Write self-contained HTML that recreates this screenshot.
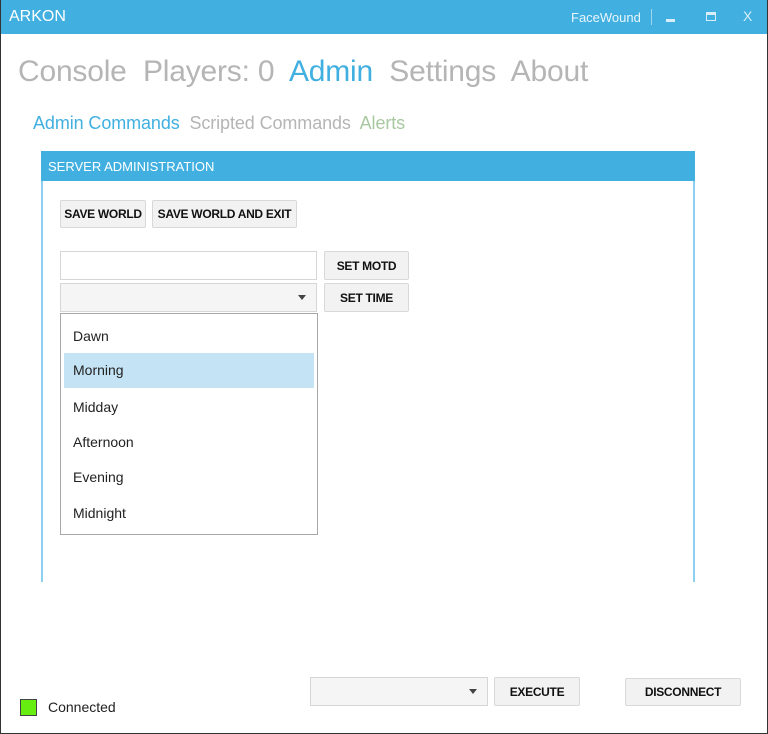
<!DOCTYPE html>
<html><head><style>
*{box-sizing:border-box;margin:0;padding:0}
body{width:768px;height:734px;overflow:hidden;background:#fff;font-family:"Liberation Sans",sans-serif;position:relative}
.win{position:absolute;left:0;top:0;width:768px;height:734px;border:1px solid #333;border-top:none}
.tb{position:absolute;left:0;top:0;width:768px;height:34px;background:#41b0e0;color:#fff}
.a{position:absolute}
.btn{position:absolute;background:#f2f2f2;border:1px solid #d8d8d8;border-radius:2px;font-size:12px;font-weight:bold;color:#111;display:flex;align-items:center;justify-content:center;letter-spacing:-0.3px}
.box{position:absolute;background:#f5f5f5;border:1px solid #d6d6d6}
.item{position:absolute;left:3px;width:250px;height:35px;font-size:14px;color:#222;padding-left:9px;line-height:35px}
</style></head><body>
<div class="tb">
<div class="a" style="left:9px;top:8px;font-size:16px">ARKON</div>
<div class="a" style="left:571px;top:10px;font-size:13px;color:#e8f5fc">FaceWound</div>
<div class="a" style="left:651px;top:9px;width:1px;height:16px;background:#9fd6ef"></div>
<div class="a" style="left:666px;top:19px;width:9px;height:3px;background:#d8eef9"></div>
<div class="a" style="left:706px;top:12px;width:10px;height:9px;border:1px solid #d8eef9;border-top-width:3px"></div>
<div class="a" style="left:743px;top:8px;font-size:14px;color:#d8eef9">X</div>
</div>
<div class="a" style="left:18px;top:55px;font-size:30px;color:#b5b5b5;white-space:nowrap;letter-spacing:-0.2px">Console&nbsp; Players: 0&nbsp; <span style="color:#41b0e0">Admin</span>&nbsp; Settings&nbsp; About</div>
<div class="a" style="left:33px;top:113px;font-size:18px;color:#b5b5b5;white-space:nowrap;letter-spacing:-0.1px"><span style="color:#41b0e0">Admin Commands</span>&nbsp; Scripted Commands&nbsp; <span style="color:#a8c8a0">Alerts</span></div>
<div class="a" style="left:41px;top:151px;width:654px;height:431px;border-left:2px solid #8fd0ee;border-right:2px solid #8fd0ee"></div>
<div class="a" style="left:41px;top:151px;width:654px;height:30px;background:#41b0e0;color:#fff;font-size:13px;padding:8px 0 0 7px">SERVER ADMINISTRATION</div>
<div class="btn" style="left:60px;top:200px;width:86px;height:28px">SAVE WORLD</div>
<div class="btn" style="left:152px;top:200px;width:145px;height:28px">SAVE WORLD AND EXIT</div>
<div class="a" style="left:60px;top:251px;width:257px;height:29px;border:1px solid #d6d6d6;background:#fff"></div>
<div class="btn" style="left:324px;top:251px;width:85px;height:29px">SET MOTD</div>
<div class="box" style="left:60px;top:283px;width:257px;height:29px"><div class="a" style="left:237px;top:11px;border-left:4px solid transparent;border-right:4px solid transparent;border-top:5px solid #444"></div></div>
<div class="btn" style="left:324px;top:283px;width:85px;height:29px">SET TIME</div>
<div class="a" style="left:60px;top:313px;width:258px;height:222px;border:1px solid #a8a8a8;background:#fff">
<div class="item" style="top:5px">Dawn</div>
<div class="item" style="top:39px;background:#c4e4f5">Morning</div>
<div class="item" style="top:76px">Midday</div>
<div class="item" style="top:111px">Afternoon</div>
<div class="item" style="top:146px">Evening</div>
<div class="item" style="top:182px">Midnight</div>
</div>
<div class="a" style="left:20px;top:699px;width:17px;height:17px;background:#66ee11;border:1px solid #444"></div>
<div class="a" style="left:48px;top:699px;font-size:14px;color:#222">Connected</div>
<div class="box" style="left:310px;top:677px;width:178px;height:29px"><div class="a" style="left:158px;top:11px;border-left:4px solid transparent;border-right:4px solid transparent;border-top:5px solid #444"></div></div>
<div class="btn" style="left:494px;top:677px;width:86px;height:29px">EXECUTE</div>
<div class="btn" style="left:625px;top:678px;width:116px;height:28px">DISCONNECT</div>
<div class="win"></div>
</body></html>
